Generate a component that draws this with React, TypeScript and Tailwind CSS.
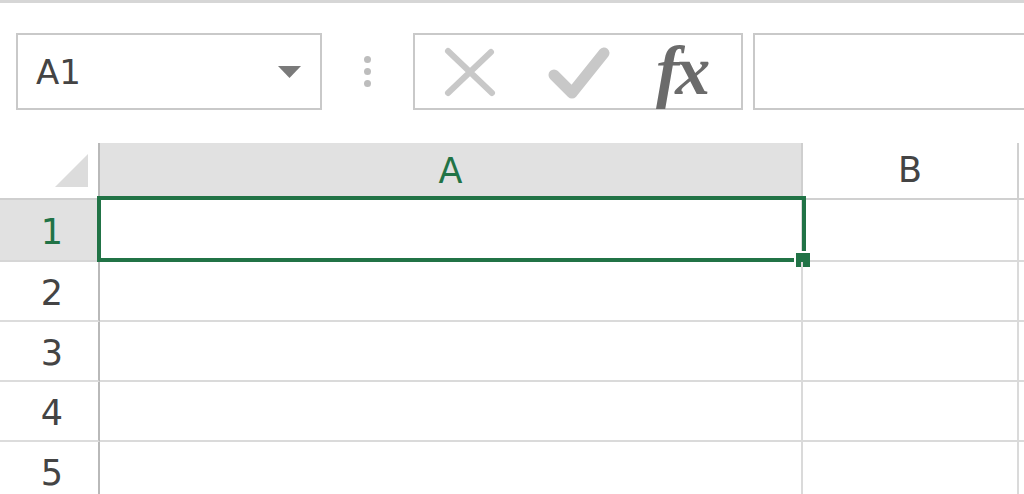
import React from "react";

const rows = [1, 2, 3, 4, 5];

/**
 * Spreadsheet name box, formula bar and the top-left corner of the grid.
 */
const App: React.FC = () => {
  return (
    <div className="w-[1024px] h-[494px] overflow-hidden bg-white font-['DejaVu_Sans',sans-serif] text-[#444444]">
      {/* top edge of the ribbon */}
      <div className="h-[3px] bg-[#d6d6d6]" />

      {/* formula bar */}
      <div className="flex items-center h-[77px] mt-[30px] pl-[16px]">
        <div className="flex items-center justify-between w-[306px] h-full border-2 border-[#c9c9c9] pl-[18px] pr-[19px]">
          <span className="text-[34px] leading-none">A1</span>
          <svg width="23" height="12" viewBox="0 0 23 12">
            <polygon points="0,0 23,0 11.5,12" fill="#7a7a7a" />
          </svg>
        </div>

        <div className="flex flex-col gap-[5px] ml-[42px]">
          <span className="w-[7px] h-[7px] rounded-full bg-[#bdbdbd]" />
          <span className="w-[7px] h-[7px] rounded-full bg-[#bdbdbd]" />
          <span className="w-[7px] h-[7px] rounded-full bg-[#bdbdbd]" />
        </div>

        <div className="flex items-center w-[330px] h-full border-2 border-[#c9c9c9] ml-[42px] pl-[27px]">
          <svg width="56" height="52" viewBox="0 0 56 52">
            <path d="M6 5 L50 47 M49 6 L6 47" stroke="#c8c8c8" strokeWidth="6" strokeLinecap="round" fill="none" />
          </svg>
          <svg width="62" height="54" viewBox="0 0 62 54" className="ml-[50px] mt-[4px]">
            <path d="M6 28 L24 46 L56 6" stroke="#c8c8c8" strokeWidth="11" strokeLinecap="round" strokeLinejoin="round" fill="none" />
          </svg>
          <span className="ml-[46px] -mt-[2px] font-['Liberation_Serif',serif] italic font-bold text-[70px] leading-none text-[#6b6b6b] tracking-[-4px]">
            fx
          </span>
        </div>

        <div className="flex-1 h-full border-2 border-r-0 border-[#c9c9c9] ml-[10px]" />
      </div>

      {/* grid */}
      <div className="grid grid-cols-[100px_703px_216px_1fr] grid-rows-[57px_62px_60px_60px_60px_60px] mt-[33px]">
        <div className="flex items-end justify-end pr-[10px] pb-[11px] border-r-2 border-b-2 border-r-[#b9b9b9] border-b-[#cfcfcf]">
          <svg width="33" height="33" viewBox="0 0 33 33">
            <polygon points="33,0 33,33 0,33" fill="#dcdcdc" />
          </svg>
        </div>
        <div className="flex items-center justify-center bg-[#e1e1e1] border-r-2 border-[#cfcfcf] text-[35px] text-[#217346]">
          A
        </div>
        <div className="flex items-center justify-center border-r-2 border-b-2 border-[#d0d0d0] text-[35px]">
          B
        </div>
        <div className="border-b-2 border-[#d0d0d0]" />

        {rows.map((r) => (
          <React.Fragment key={r}>
            <div
              className={
                r === 1
                  ? "flex items-center justify-center pt-[4px] pl-[6px] bg-[#e1e1e1] border-r-2 border-b-2 border-r-[#b9b9b9] border-b-[#d6d6d6] text-[35px] text-[#217346]"
                  : "flex items-center justify-center pt-[4px] pl-[6px] border-r-2 border-b-2 border-r-[#b9b9b9] border-b-[#dcdcdc] text-[35px]"
              }
            >
              {r}
            </div>
            <div className="relative border-r-2 border-b-2 border-[#dadada]">
              {r === 1 && (
                <>
                  <div className="absolute -left-[3px] -top-[4px] -right-[5px] -bottom-[2px] border-[4px] border-[#217346]" />
                  <div className="absolute -right-[9px] -bottom-[7px] w-[16px] h-[16px] bg-[#217346] border-l-2 border-t-2 border-white" />
                </>
              )}
            </div>
            <div className="border-r-2 border-b-2 border-[#dadada]" />
            <div className="border-b-2 border-[#dadada]" />
          </React.Fragment>
        ))}
      </div>
    </div>
  );
};

export default App;
